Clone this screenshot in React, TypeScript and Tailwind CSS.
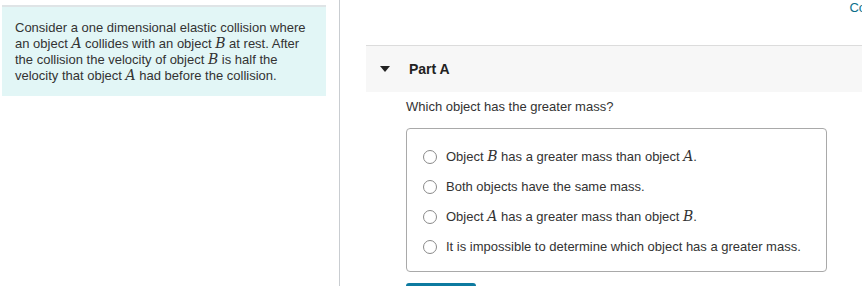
import React from "react";

const M = ({ c }: { c: string }) => (
  <span style={{ fontFamily: '"DejaVu Serif", "Liberation Serif", serif' }} className="italic text-[14px] leading-none">
    {c}
  </span>
);

const options: React.ReactNode[] = [
  <>Object <M c="B" /> has a greater mass than object <M c="A" />.</>,
  <>Both objects have the same mass.</>,
  <>Object <M c="A" /> has a greater mass than object <M c="B" />.</>,
  <>It is impossible to determine which object has a greater mass.</>,
];

export default function App() {
  return (
    <div
      className="w-[862px] h-[286px] overflow-hidden bg-white flex text-[#333]"
      style={{ fontFamily: '"Liberation Sans", Arial, sans-serif' }}
    >
      <div className="w-[339px] shrink-0 pt-[5px] pl-[2px]">
        <div className="w-[324px] h-[91px] bg-[#e2f6f6] border-t-2 border-[#dfe4e6] pl-[13px] pr-[16px] pt-[13px] text-[13px] leading-[16px]">
          Consider a one dimensional elastic collision where an object <M c="A" /> collides with an object <M c="B" /> at rest. After the collision the velocity of object <M c="B" /> is half the velocity that object <M c="A" /> had before the collision.
        </div>
      </div>
      <div className="w-px shrink-0 bg-[#c9cdd1]" />
      <div className="flex-1 flex flex-col min-h-0">
        <div className="h-[45px] shrink-0 flex justify-end items-start">
          <span className="text-[13px] text-[#0c6e8a] leading-[15px] mr-[-4px] whitespace-nowrap">Co</span>
        </div>
        <div className="ml-[26px] h-[47px] shrink-0 bg-[#f7f7f7] border-t border-[#dcdcdc] flex items-center">
          <svg width="10" height="6" viewBox="0 0 10 6" className="ml-[14px]">
            <path d="M0 0 L10 0 L5 6 Z" fill="#222" />
          </svg>
          <span className="ml-[19px] text-[14px] font-bold text-[#222]">Part A</span>
        </div>
        <div className="ml-[66px] mt-[7px] shrink-0 text-[13px] leading-[16px]">Which object has the greater mass?</div>
        <div className="ml-[66px] mt-[13px] shrink-0 w-[421px] h-[144px] border border-[#a9a9a9] rounded-[4px] pt-[13px] pl-[16px] flex flex-col">
          {options.map((o, i) => (
            <div key={i} className="h-[30px] shrink-0 flex items-center text-[13px]">
              <span className="w-[14px] h-[14px] rounded-full border border-[#8a8a8a] bg-white shrink-0" />
              <span className="ml-[9px]">{o}</span>
            </div>
          ))}
        </div>
        <div className="ml-[66px] mt-[11px] shrink-0 w-[70px] h-[20px] bg-[#0d7aa0] rounded-t-[3px]" />
      </div>
    </div>
  );
}
